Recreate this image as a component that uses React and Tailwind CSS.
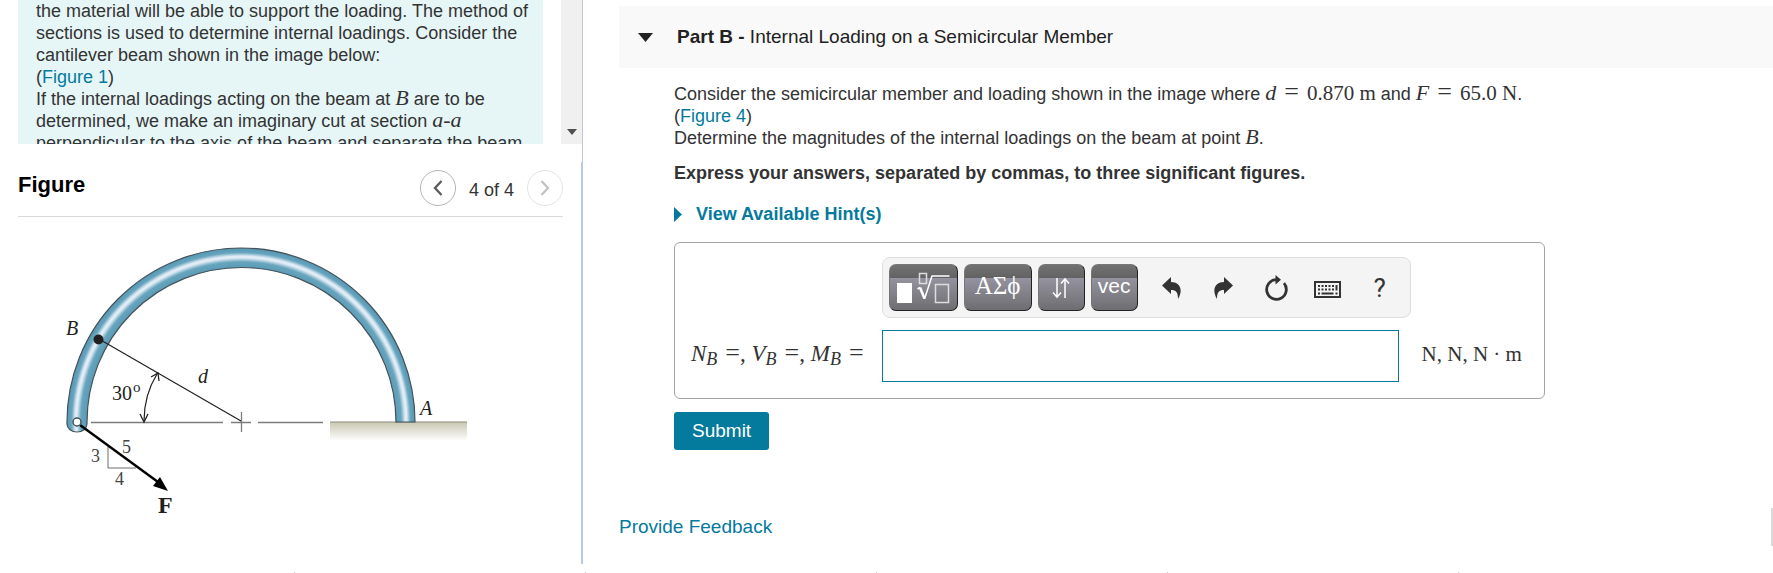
import { clsx } from 'clsx';

// Inline math, set in a serif face next to the sans body text
const Math = ({ children, italic = false }) => (
  <span className={clsx("font-['Liberation_Serif',serif] leading-[0]", italic ? 'text-[22px] italic' : 'text-[21px]')}>
    {children}
  </span>
);

const Equals = () => <span className="mx-2 font-['Liberation_Serif',serif] text-[26px] leading-[0]">=</span>;

const Variable = ({ name }) => (
  <>
    <span className="italic">
      {name}
      <sub className="bottom-[-4px] text-[18px]">B</sub>
    </span>
    <span className="ml-2 text-[26px] leading-[0]">=</span>
  </>
);

const TransferredIntro = () => (
  <section className="h-[162px] border-r border-[#c3c7d3] pb-[18px] pl-[18px]">
    <div className="flex h-full overflow-hidden">
      <div className="flex grow flex-col justify-end bg-[#e6f6f7] px-[18px]">
        <p className="-mb-[10px] w-0 whitespace-nowrap">
          the material will be able to support the loading. The method of
          <br />
          sections is used to determine internal loadings. Consider the
          <br />
          cantilever beam shown in the image below:
          <br />(<a href="#figure-1" className="text-[#047a9c]">Figure 1</a>)
          <br />
          If the internal loadings acting on the beam at <Math italic>B</Math> are to be
          <br />
          determined, we make an imaginary cut at section <Math italic>a-a</Math>
          <br />
          perpendicular to the axis of the beam and separate the beam
        </p>
      </div>
      <div className="ml-[18px] flex w-[21px] shrink-0 items-end justify-center bg-[#f0f0f0] pb-[9px]">
        <svg width="10" height="6" viewBox="0 0 10 6" aria-hidden="true">
          <path d="M0 0h10L5 6z" fill="#505050" />
        </svg>
      </div>
    </div>
  </section>
);

const BeamDrawing = () => (
  <svg
    className="block max-w-full"
    width="480"
    height="320"
    viewBox="0 0 480 320"
    fontFamily="'Liberation Serif', serif"
    fill="#231f20"
  >
    <defs>
      <linearGradient id="ground" x1="0" y1="0" x2="0" y2="1">
        <stop offset="0" stopColor="#c9c8b2" />
        <stop offset="1" stopColor="#ffffff" />
      </linearGradient>
      <radialGradient id="tube" gradientUnits="userSpaceOnUse" cx="223" cy="205" r="175">
        <stop offset="0.885" stopColor="#5b9cb6" />
        <stop offset="0.915" stopColor="#68a5be" />
        <stop offset="0.938" stopColor="#dfebf5" />
        <stop offset="0.948" stopColor="#dfebf5" />
        <stop offset="0.968" stopColor="#68a5be" />
        <stop offset="1" stopColor="#4f93b0" />
      </radialGradient>
    </defs>

    {/* ground */}
    <rect x="312" y="205" width="137" height="19" fill="url(#ground)" />
    <path d="M312 205h137" stroke="#8b8a7c" />

    {/* semicircular member */}
    <path
      d="M49 205A174 174 0 0 1 397 205H378A154.500 154.500 0 0 0 69 205V207A10 8 0 0 1 49 207Z"
      fill="url(#tube)"
      stroke="#45525a"
      strokeWidth="1.2"
    />

    {/* centre line */}
    <path d="M73 205.500H205M213 205.500H233M240 205.500H305M223.500 195V215" stroke="#7d7d7d" strokeWidth="1.300" />

    {/* radius and angle */}
    <path d="M81 122L223 204" stroke="#231f20" strokeWidth="1.200" />
    <path d="M126 204C126 186 131 170 139 157" fill="none" stroke="#231f20" strokeWidth="1.200" />
    <path d="M122 197L126 205L130 197M133 160L140 156L141 164" fill="none" stroke="#231f20" strokeWidth="1.300" />
    <circle cx="80.500" cy="122.500" r="5" />

    {/* force and its slope triangle */}
    <path d="M90 230V251H118" fill="none" stroke="#6c6c6c" />
    <path d="M62 208L140 265" stroke="#000" strokeWidth="2.400" />
    <path d="M150 274L135 269L142 260Z" fill="#000" />
    <circle cx="59" cy="205" r="4" fill="#fff" stroke="#45525a" strokeWidth="1.500" />

    <g fontSize="20">
      <text x="48" y="118" fontStyle="italic">B</text>
      <text x="180" y="166" fontStyle="italic">d</text>
      <text x="402" y="198" fontStyle="italic">A</text>
      <text x="94" y="183">30</text>
      <text x="115" y="175" fontSize="15">o</text>
    </g>
    <g fontSize="18" fill="#444">
      <text x="73" y="245">3</text>
      <text x="104" y="236">5</text>
      <text x="97" y="268">4</text>
    </g>
    <text x="140" y="296" fontSize="24" fontWeight="bold">F</text>
  </svg>
);

const FigurePanel = () => (
  <section className="grow border-r-2 border-[#b8cadb] pl-[18px]">
    <header className="mr-[18px] flex items-center border-b border-[#d9d9d9] pt-2 pb-[10px]">
      <h2 className="grow pb-[6px] text-[22px] leading-7 font-bold text-black">Figure</h2>
      <button
        type="button"
        aria-label="Previous figure"
        className="flex size-9 items-center justify-center rounded-full border border-[#b5b5b5]"
      >
        <svg width="10" height="16" viewBox="0 0 10 16" fill="none" stroke="#5a5a5a" strokeWidth="2.300">
          <path d="M8.500 1L2 8l6.500 7" />
        </svg>
      </button>
      <span className="mx-[13px] pt-1">4 of 4</span>
      <button
        type="button"
        aria-label="Next figure"
        disabled
        className="flex size-9 items-center justify-center rounded-full border border-[#e3e3e3]"
      >
        <svg width="10" height="16" viewBox="0 0 10 16" fill="none" stroke="#c2c2c2" strokeWidth="2.300">
          <path d="M1.500 1L8 8l-6.500 7" />
        </svg>
      </button>
    </header>
    <BeamDrawing />
  </section>
);

const PaletteButton = ({ label, className, children }) => (
  <button
    type="button"
    aria-label={label}
    className={clsx(
      'flex h-[47px] items-center justify-center rounded-[7px] border border-t-[#777] border-r-[#222] border-b-[#222] border-l-[#777] text-white',
      'bg-[linear-gradient(#727272,#626262_30%,#94929e_30%,#6e6e71)]',
      className
    )}
  >
    {children}
  </button>
);

const ToolButton = ({ label, children }) => (
  <button type="button" aria-label={label} className="flex h-10 w-[52px] items-center justify-center text-[#333]">
    {children}
  </button>
);

const Toolbar = () => (
  <div className="flex h-[61px] items-center rounded-lg border border-[#dedede] bg-[#f4f4f4] pl-[6px]">
    <div className="flex gap-[6px]">
      <PaletteButton label="Templates" className="w-[69px]">
        <svg width="54" height="32" viewBox="0 0 54 32" fill="none" stroke="#fff">
          <path d="M1 11h15v20H1z" fill="#fff" stroke="none" />
          <path d="M23.500 1.500h7v10h-7z" stroke="#ddd" strokeWidth="1.500" />
          <path d="M21.500 17l2.500-1.500" strokeWidth="1.500" />
          <path d="M24 15.500l4.500 11" strokeWidth="2.600" />
          <path d="M28.500 27L36 4h17.500" strokeWidth="1.500" />
          <path d="M39.500 12.500h13v18h-13z" stroke="#ddd" strokeWidth="1.500" />
        </svg>
      </PaletteButton>
      <PaletteButton label="Greek symbols" className="w-[68px] pb-1 font-['Liberation_Serif',serif] text-[25px]">
        ΑΣϕ
      </PaletteButton>
      <PaletteButton label="Accents and arrows" className="w-[47px]">
        <svg width="18" height="22" viewBox="0 0 18 22" fill="none" stroke="#fff" strokeWidth="1.500">
          <path d="M5 1v19M1 15.500l4 4.500 4-4.500M13 21V2M9 6.500L13 2l4 4.500" />
        </svg>
      </PaletteButton>
      <PaletteButton label="Vectors" className="w-[47px] pb-1 text-[21px]">
        vec
      </PaletteButton>
    </div>
    <div className="ml-2 flex">
      <ToolButton label="Undo">
        <svg width="19" height="22" viewBox="0 0 19 22" fill="currentColor">
          <path d="M0 8.500L9 0v5c8 0 13 7 7 17 0-7-2-9-7-9v4z" />
        </svg>
      </ToolButton>
      <ToolButton label="Redo">
        <svg width="19" height="22" viewBox="0 0 19 22" fill="currentColor">
          <path d="M19 8.500L10 0v5C2 5-3 12 3 22c0-7 2-9 7-9v4z" />
        </svg>
      </ToolButton>
      <ToolButton label="Reset">
        <svg width="24" height="26" viewBox="0 0 24 26" fill="none" stroke="currentColor" strokeWidth="2.800">
          <path d="M20 8.200A9.800 9.800 0 1 1 12 4.700" />
          <path d="M11.500 0l5.500 4.700-5.500 4.800z" fill="currentColor" stroke="none" />
        </svg>
      </ToolButton>
      <ToolButton label="Keyboard shortcuts">
        <svg className="mt-1" width="27" height="17" viewBox="0 0 27 17" fill="none" stroke="currentColor">
          <path d="M1 1h25v15H1z" strokeWidth="2" />
          <path d="M4 5h17M4 8.500h17M4 12.500h2M21.500 12.500h2" strokeWidth="2" strokeDasharray="2 1.500" />
          <path d="M7.500 12.500h12M22.500 4v5.500" strokeWidth="2" />
        </svg>
      </ToolButton>
      <ToolButton label="Help">
        <span className="font-['Roboto',sans-serif] text-[26px]">?</span>
      </ToolButton>
    </div>
  </div>
);

const AnswerBox = () => (
  <div className="grid w-fit grid-cols-[auto_auto_auto] items-center gap-y-3 rounded-md border border-[#a3a3a3] pt-[14px] pr-[22px] pb-4 pl-4">
    <div className="col-start-2">
      <Toolbar />
    </div>
    <label
      htmlFor="answer"
      className="col-start-1 mr-[18px] pb-1 font-['Liberation_Serif',serif] text-[23px] whitespace-nowrap"
    >
      <Variable name="N" />, <Variable name="V" />, <Variable name="M" />
    </label>
    <input id="answer" type="text" className="mr-3 h-[52px] w-[517px] border border-[#047a9c] px-2 outline-none" />
    <span className="ml-[11px] pb-1 font-['Liberation_Serif',serif] text-[21px] whitespace-nowrap">N, N, N · m</span>
  </div>
);

const PartB = () => (
  <main className="grow pt-[6px] pl-9">
    <header className="flex h-[62px] items-center bg-[#f9f9f9] pl-[19px]">
      <button type="button" aria-label="Collapse part" className="mr-6">
        <svg width="15" height="9" viewBox="0 0 15 9">
          <path d="M0 0h15L7.500 9z" fill="#222" />
        </svg>
      </button>
      <h2 className="text-[19px] text-[#222]">
        <b>Part B -</b> Internal Loading on a Semicircular Member
      </h2>
    </header>
    <div className="pt-[15px] pl-[55px]">
      <p>
        Consider the semicircular member and loading shown in the image where <Math italic>d</Math>
        <Equals />
        <Math>0.870 m</Math> and <Math italic>F</Math>
        <Equals />
        <Math>65.0 N</Math>.
        <br />(<a href="#figure-4" className="text-[#047a9c]">Figure 4</a>)
        <br />
        Determine the magnitudes of the internal loadings on the beam at point <Math italic>B</Math>.
      </p>
      <p className="mt-[13px] font-bold">Express your answers, separated by commas, to three significant figures.</p>
      <button type="button" className="mt-[19px] mb-[17px] flex items-center font-bold text-[#047a9c]">
        <svg width="8" height="15" viewBox="0 0 8 15" className="mr-[14px]">
          <path d="M0 0l8 7.500L0 15z" fill="currentColor" />
        </svg>
        View Available Hint(s)
      </button>
      <AnswerBox />
      <button type="submit" className="mt-[13px] h-[38px] rounded-[3px] bg-[#047a9c] px-[18px] text-[19px] text-white">
        Submit
      </button>
    </div>
    <a href="#feedback" className="mt-[66px] inline-block text-[19px] text-[#047a9c]">
      Provide Feedback
    </a>
  </main>
);

function App() {
  return (
    <div className="relative flex min-h-screen bg-white font-['Liberation_Sans',Arial,sans-serif] text-[18px] leading-[22px] text-[#333]">
      <aside className="flex w-[583px] shrink-0 flex-col pb-[9px]">
        <TransferredIntro />
        <FigurePanel />
      </aside>
      <PartB />
      <div className="absolute top-[508px] right-0 h-[38px] w-[2px] bg-[#d9d9d9]" />
      <div className="absolute inset-x-0 bottom-0 flex justify-evenly pr-6 pl-1">
        {[1, 2, 3, 4, 5].map((tick) => (
          <span key={tick} className="size-px bg-[#c4c4c4]" />
        ))}
      </div>
    </div>
  );
}

export default App;
